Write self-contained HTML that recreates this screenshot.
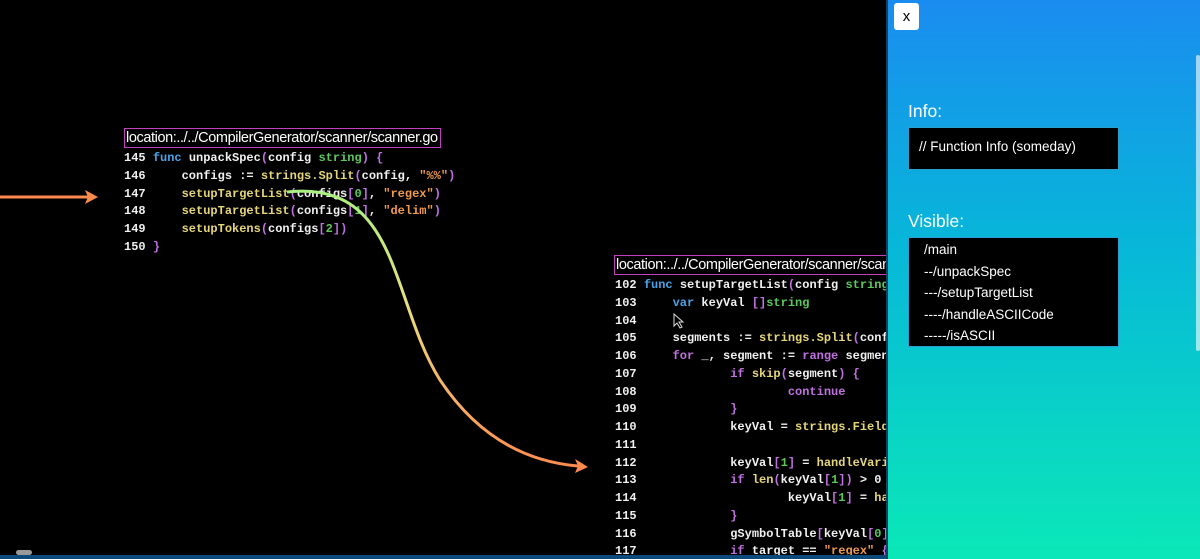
<!DOCTYPE html>
<html><head><style>
html,body{margin:0;width:1200px;height:559px;overflow:hidden}
body{background:#000;position:relative;font-family:"Liberation Sans",sans-serif}
.code{position:absolute;font-family:"Liberation Mono",monospace;font-size:12px;color:#f0f0f0;font-weight:bold}
.code div{height:17.75px;line-height:17.75px;white-space:pre}
.loc{position:absolute;border:1px solid #c040c0;color:#fff;font-size:14.5px;line-height:18px;padding:0 1px;white-space:nowrap;overflow:hidden;letter-spacing:-0.4px}
.k{color:#4aa3e8}.t{color:#5cc85c}.f{color:#e6d67a}.s{color:#f09a50}.p{color:#c070e0}.n{color:#5cc85c}
#panel{position:absolute;left:886px;top:0;width:314px;height:559px;background:linear-gradient(#1a8cf0,#07b8d8 45%,#0be8b8);border-left:2px solid #1a4060;box-sizing:border-box}
.btn{position:absolute;left:6px;top:3px;width:25px;height:27px;background:#fff;border-radius:3px;font-size:15px;line-height:27px;text-align:center;color:#000}
.h{position:absolute;left:20px;color:#fff;font-size:17.5px}
.box{position:absolute;left:20px;width:211px;background:#000;color:#fff;font-size:13.5px;border:1px solid #2aa0d0;box-sizing:border-box}
</style></head><body>
<div class="loc" style="left:124px;top:128px;width:313px">location:../../CompilerGenerator/scanner/scanner.go</div>
<div class="code" style="left:124px;top:150px"><div>145 <span class="k">func</span> unpackSpec<span class="p">(</span>config <span class="t">string</span><span class="p">)</span> <span class="p">{</span></div><div>146     configs := <span class="f">strings.Split</span><span class="p">(</span>config, <span class="s">"%%"</span><span class="p">)</span></div><div>147     <span class="f">setupTargetList</span><span class="p">(</span>configs<span class="p">[</span><span class="n">0</span><span class="p">]</span>, <span class="s">"regex"</span><span class="p">)</span></div><div>148     <span class="f">setupTargetList</span><span class="p">(</span>configs<span class="p">[</span><span class="n">1</span><span class="p">]</span>, <span class="s">"delim"</span><span class="p">)</span></div><div>149     <span class="f">setupTokens</span><span class="p">(</span>configs<span class="p">[</span><span class="n">2</span><span class="p">]</span><span class="p">)</span></div><div>150 <span class="p">}</span></div></div>
<div class="loc" style="left:614px;top:255px;width:290px">location:../../CompilerGenerator/scanner/scanner.go</div>
<div class="code" style="left:615px;top:277px"><div>102 <span class="k">func</span> setupTargetList<span class="p">(</span>config <span class="t">string</span>,</div><div>103     <span class="k">var</span> keyVal <span class="p">[]</span><span class="t">string</span></div><div>104 </div><div>105     segments := <span class="f">strings.Split</span><span class="p">(</span>config, <span class="s">"\n"</span></div><div>106     <span class="p">for</span> _, segment := <span class="p">range</span> segments</div><div>107             <span class="p">if</span> <span class="f">skip</span><span class="p">(</span>segment<span class="p">)</span> <span class="p">{</span></div><div>108                     <span class="p">continue</span></div><div>109             <span class="p">}</span></div><div>110             keyVal = <span class="f">strings.Fields</span></div><div>111 </div><div>112             keyVal<span class="p">[</span><span class="n">1</span><span class="p">]</span> = <span class="f">handleVariable</span></div><div>113             <span class="p">if</span> <span class="f">len</span><span class="p">(</span>keyVal<span class="p">[</span><span class="n">1</span><span class="p">])</span> &gt; 0 &amp;&amp;</div><div>114                     keyVal<span class="p">[</span><span class="n">1</span><span class="p">]</span> = <span class="f">handle</span></div><div>115             <span class="p">}</span></div><div>116             gSymbolTable<span class="p">[</span>keyVal<span class="p">[</span><span class="n">0</span><span class="p">]]</span></div><div>117             <span class="p">if</span> target == <span class="s">"regex"</span> <span class="p">{</span></div></div>
<svg style="position:absolute;left:0;top:0" width="1200" height="559">
<defs><linearGradient id="g" gradientUnits="userSpaceOnUse" x1="0" y1="190" x2="0" y2="470">
<stop offset="0" stop-color="#a8f080"/><stop offset="0.4" stop-color="#e8e080"/><stop offset="1" stop-color="#ff8a50"/></linearGradient></defs>
<line x1="0" y1="197" x2="88" y2="197" stroke="#ff8a50" stroke-width="3"/>
<polygon points="85,190 98,197 85,204 88,197" fill="#ff8a50"/>
<path d="M287,192 C400,180 390,300 440,380 C480,440 530,462 578,466" fill="none" stroke="url(#g)" stroke-width="3"/>
<polygon points="575,459 588,467 575,473 578,466" fill="#ff8a50"/>
<path d="M674,314 l0,12 l3,-3 l3,5 l2,-1 l-3,-5 l4,0 z" fill="#000" stroke="#ddd" stroke-width="1"/>
<rect x="0" y="555" width="886" height="4" fill="#0c4a7c"/>
<rect x="16" y="550" width="16" height="5" rx="2.5" fill="#999"/>
</svg>
<div id="panel">
<div class="btn">x</div>
<div style="position:absolute;left:308px;top:55px;width:4px;height:296px;background:rgba(255,255,255,0.6);border-radius:2px"></div>
<div class="h" style="top:101px">Info:</div>
<div class="box" style="top:127px;height:43px;padding:11px 0 0 10px">// Function Info (someday)</div>
<div class="h" style="top:211px">Visible:</div>
<div class="box" style="top:237px;height:110px;padding:1px 0 0 15px;line-height:21.5px">/main<br>--/unpackSpec<br>---/setupTargetList<br>----/handleASCIICode<br>-----/isASCII</div>
</div>
</body></html>
